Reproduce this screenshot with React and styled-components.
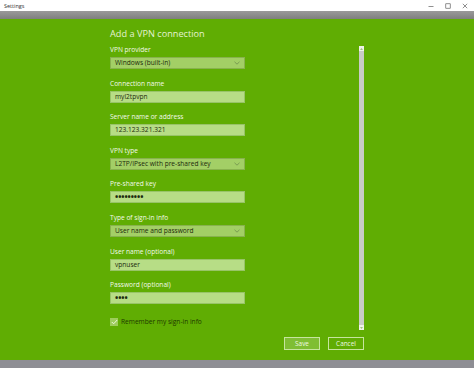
import React from "react";
import styled, { createGlobalStyle } from "styled-components";

const Global = createGlobalStyle`
  html, body { margin: 0; padding: 0; }
  body { width: 474px; height: 368px; overflow: hidden; font-family: "Open Sans", "Noto Sans", sans-serif; }
`;

const Window = styled.div`
  width: 474px;
  height: 368px;
  display: flex;
  flex-direction: column;
`;

const TitleBar = styled.div`
  height: 11px;
  background: #ffffff;
  display: flex;
  align-items: center;
  padding: 0 4px;
  box-sizing: border-box;
`;

const AppName = styled.span`
  font-size: 5.5px;
  color: #333;
  flex: 1;
`;

const Controls = styled.div`
  display: flex;
  align-items: center;
  gap: 11px;
  padding-right: 2px;
`;

const Band = styled.div`
  height: ${(p) => p.$h}px;
  background: ${(p) => p.$bg};
`;

const Content = styled.div`
  flex: 1;
  background: #60ad03;
  display: flex;
  flex-direction: column;
  padding: 0 110px;
  min-height: 0;
`;

const Body = styled.div`
  flex: 1;
  display: flex;
  min-height: 0;
`;

const Form = styled.div`
  width: 135px;
  padding-top: 7px;
  display: flex;
  flex-direction: column;
`;

const Title = styled.h1`
  margin: 0 0 3px;
  font-size: 9.2px;
  line-height: 16px;
  font-weight: 400;
  color: #e4f2d2;
  white-space: nowrap;
`;

const Group = styled.div`
  display: flex;
  flex-direction: column;
  margin-bottom: 9.6px;
`;

const Label = styled.label`
  font-size: 6.6px;
  line-height: 9px;
  color: #f2f9ea;
  margin-bottom: 3px;
  white-space: nowrap;
`;

const Field = styled.div`
  height: 12px;
  box-sizing: border-box;
  border: 1px solid ${(p) => (p.$select ? "#88b24e" : "#98c468")};
  background: ${(p) => (p.$select ? "#a3cf66" : "#b7dd86")};
  display: flex;
  align-items: center;
  padding: 0 4px;
  font-size: 6.6px;
  color: #1c2a0c;
  white-space: nowrap;
`;

const FieldText = styled.span`
  flex: 1;
  letter-spacing: ${(p) => (p.$dots ? "-0.05px" : "0")};
  font-size: ${(p) => (p.$dots ? "8.5px" : "6.6px")};
  font-weight: ${(p) => (p.$dots ? 700 : 400)};
  line-height: 10px;
`;

const CheckRow = styled.div`
  display: flex;
  align-items: center;
  gap: 3px;
  margin-top: 3.4px;
`;

const CheckBox = styled.div`
  width: 8px;
  height: 8px;
  background: #9dcc5c;
  display: flex;
  align-items: center;
  justify-content: center;
`;

const CheckText = styled.span`
  font-size: 6.6px;
  color: #1d3800;
  white-space: nowrap;
`;

const ScrollTrack = styled.div`
  margin-left: auto;
  margin-top: 27px;
  margin-bottom: 7px;
  width: 5px;
  background: #c9cbc6;
  display: flex;
  flex-direction: column;
  justify-content: space-between;
  align-items: center;
`;

const ScrollArrow = styled.div`
  width: 5px;
  height: 5px;
  background: #eef3e8;
  display: flex;
  align-items: center;
  justify-content: center;
`;

const Footer = styled.div`
  display: flex;
  justify-content: flex-end;
  gap: 8px;
  padding-bottom: 10px;
`;

const Button = styled.button`
  width: 36px;
  height: 13px;
  box-sizing: border-box;
  border: 1px solid #c6e59e;
  background: ${(p) => (p.$primary ? "#7fbe33" : "transparent")};
  color: #eef8e2;
  font-family: inherit;
  font-size: 6.4px;
  padding: 0;
  display: flex;
  align-items: center;
  justify-content: center;
`;

const Chevron = () => (
  <svg width="6" height="4" viewBox="0 0 6 4">
    <polyline points="0.5,0.8 3,3.2 5.5,0.8" fill="none" stroke="#6f8f4d" strokeWidth="0.8" />
  </svg>
);

const fields = [
  { label: "VPN provider", value: "Windows (built-in)", select: true },
  { label: "Connection name", value: "myl2tpvpn" },
  { label: "Server name or address", value: "123.123.321.321" },
  { label: "VPN type", value: "L2TP/IPsec with pre-shared key", select: true },
  { label: "Pre-shared key", value: "•••••••••", dots: true },
  { label: "Type of sign-in info", value: "User name and password", select: true },
  { label: "User name (optional)", value: "vpnuser" },
  { label: "Password (optional)", value: "••••", dots: true },
];

export default function App() {
  return (
    <>
      <Global />
      <Window>
        <TitleBar>
          <AppName>Settings</AppName>
          <Controls>
            <svg width="6" height="6" viewBox="0 0 6 6">
              <line x1="0.5" y1="3.5" x2="5.5" y2="3.5" stroke="#444" strokeWidth="0.6" />
            </svg>
            <svg width="6" height="6" viewBox="0 0 6 6">
              <rect x="0.8" y="0.8" width="4.4" height="4.4" fill="none" stroke="#444" strokeWidth="0.6" />
            </svg>
            <svg width="6" height="6" viewBox="0 0 6 6">
              <path d="M0.8 0.8 L5.2 5.2 M5.2 0.8 L0.8 5.2" stroke="#444" strokeWidth="0.6" />
            </svg>
          </Controls>
        </TitleBar>
        <Band $h={8} $bg="linear-gradient(#9a9a9a, #7f7f7f)" />
        <Content>
          <Body>
            <Form>
              <Title>Add a VPN connection</Title>
              {fields.map((f) => (
                <Group key={f.label}>
                  <Label>{f.label}</Label>
                  <Field $select={f.select}>
                    <FieldText $dots={f.dots}>{f.value}</FieldText>
                    {f.select && <Chevron />}
                  </Field>
                </Group>
              ))}
              <CheckRow>
                <CheckBox>
                  <svg width="7" height="6" viewBox="0 0 7 6">
                    <polyline points="0.8,3 2.6,4.8 6.2,1" fill="none" stroke="#f4fbe9" strokeWidth="0.9" />
                  </svg>
                </CheckBox>
                <CheckText>Remember my sign-in info</CheckText>
              </CheckRow>
            </Form>
            <ScrollTrack>
              <ScrollArrow>
                <svg width="3" height="2" viewBox="0 0 3 2">
                  <polygon points="0,2 1.5,0 3,2" fill="#9fbf80" />
                </svg>
              </ScrollArrow>
              <ScrollArrow>
                <svg width="3" height="2" viewBox="0 0 3 2">
                  <polygon points="0,0 1.5,2 3,0" fill="#9fbf80" />
                </svg>
              </ScrollArrow>
            </ScrollTrack>
          </Body>
          <Footer>
            <Button $primary>Save</Button>
            <Button>Cancel</Button>
          </Footer>
        </Content>
        <Band $h={8} $bg="#8e8e94" />
      </Window>
    </>
  );
}
